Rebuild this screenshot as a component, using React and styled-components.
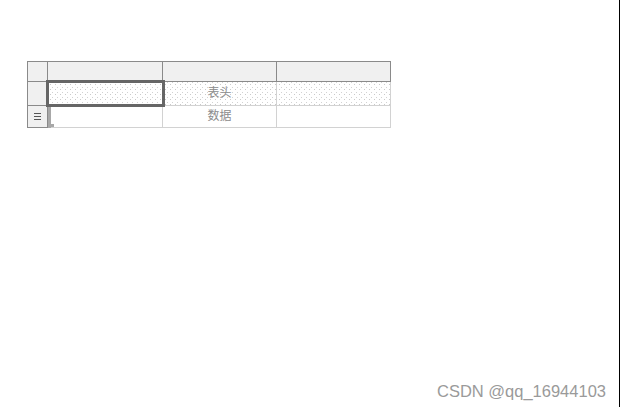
import React from 'react';
import styled, { createGlobalStyle } from 'styled-components';

const GlobalStyle = createGlobalStyle`
  html, body {
    margin: 0;
    padding: 0;
    background: #fff;
  }
  body {
    font-family: "Liberation Sans", "Noto Sans CJK SC", sans-serif;
  }
`;

const DARK = '#8a8a8a';
const LIGHT = '#d2d2d2';

const columns = ['', '', ''];
const rows = [
  { dotted: true, cells: ['', '表头', ''] },
  { dotted: false, cells: ['', '数据', ''] },
];

const Page = () => (
  <>
    <GlobalStyle />
    <Canvas>
      <Sheet>
        <Corner />
        {columns.map((_, i) => (
          <ColHeader key={i} />
        ))}
        {rows.map((row, r) => (
          <React.Fragment key={r}>
            <RowHeader>
              {r === rows.length - 1 && (
                <svg width="9" height="9" viewBox="0 0 9 9">
                  <path d="M1 1.5h7M1 4.5h7M1 7.5h7" stroke="#555" strokeWidth="1" />
                </svg>
              )}
            </RowHeader>
            {row.cells.map((text, c) => (
              <Cell key={c} dotted={row.dotted}>
                {text}
                {r === 0 && c === 0 && <Selection />}
                {r === 1 && c === 0 && (
                  <>
                    <HandleBar />
                    <HandleDot />
                  </>
                )}
              </Cell>
            ))}
          </React.Fragment>
        ))}
      </Sheet>
      <Watermark>CSDN @qq_16944103</Watermark>
    </Canvas>
  </>
);

export default Page;

const Canvas = styled.div`
  box-sizing: border-box;
  width: 620px;
  height: 407px;
  border-right: 1px solid #000;
  padding: 61px 0 0 27px;
  display: flex;
  flex-direction: column;
  align-items: flex-start;
`;

const Sheet = styled.div`
  display: grid;
  grid-template-columns: 21px 115px 114px 114px;
  grid-template-rows: 21px 24px 22px;
`;

const Corner = styled.div`
  box-sizing: border-box;
  background: #f0f0f0;
  border: 1px solid ${DARK};
`;

const ColHeader = styled.div`
  box-sizing: border-box;
  background: #f0f0f0;
  border-top: 1px solid ${DARK};
  border-right: 1px solid ${DARK};
  border-bottom: 1px solid ${DARK};
`;

const RowHeader = styled.div`
  box-sizing: border-box;
  background: #f0f0f0;
  border-left: 1px solid ${DARK};
  border-right: 1px solid ${DARK};
  border-bottom: 1px solid ${DARK};
  display: flex;
  align-items: center;
  justify-content: center;
`;

const Cell = styled.div`
  position: relative;
  box-sizing: border-box;
  border-right: 1px solid ${LIGHT};
  border-bottom: 1px solid ${LIGHT};
  display: flex;
  align-items: center;
  justify-content: center;
  font-family: "Noto Sans CJK SC", sans-serif;
  font-size: 12px;
  color: #8c8c8c;
  padding-bottom: 4px;
  background-color: #fff;
  background-image: ${({ dotted }) =>
    dotted
      ? 'radial-gradient(circle, #cacaca 0.55px, transparent 0.85px), radial-gradient(circle, #d2d2d2 0.55px, transparent 0.85px)'
      : 'none'};
  background-size: 5px 5px;
  background-position: 0 0, 2px 3px;
`;

const Selection = styled.div`
  position: absolute;
  z-index: 3;
  box-sizing: border-box;
  left: -2px;
  top: -2px;
  width: 119px;
  height: 27px;
  border: 3px solid #666;
`;

const HandleBar = styled.div`
  position: absolute;
  z-index: 2;
  left: 0;
  top: 1px;
  width: 3px;
  height: 21px;
  background: #a8a8a8;
`;

const HandleDot = styled.div`
  position: absolute;
  z-index: 2;
  left: 3px;
  top: 18px;
  width: 3px;
  height: 3px;
  background: #a8a8a8;
`;

const Watermark = styled.div`
  margin-top: auto;
  align-self: flex-end;
  margin-right: 13px;
  margin-bottom: 6px;
  font-family: "Liberation Sans", Arial, sans-serif;
  font-size: 16.5px;
  line-height: 20px;
  color: #9a9a9a;
`;
